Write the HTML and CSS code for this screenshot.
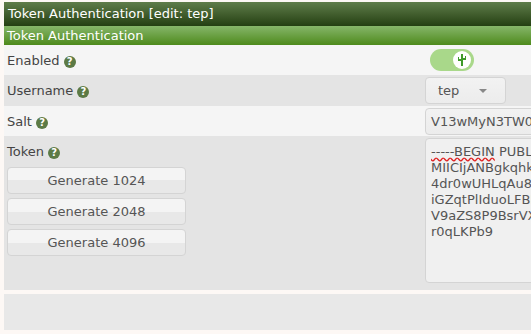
FILE: index.html
```html
<!DOCTYPE html>
<html lang="en">
<head>
  <meta charset="UTF-8" />
  <title>Token Authentication</title>
  <link rel="stylesheet" href="styles.css">
</head>
<body>

  <div class="window">
    <div class="titlebar">Token Authentication [edit: tep]</div>
    <div class="section">Token Authentication</div>

    <div class="row light">
      <div class="label">Enabled <span class="help">?</span></div>
      <div class="field">
        <div class="toggle">
          <span class="knob">
            <svg width="10" height="14" viewBox="0 0 10 14">
              <path d="M4 1h2v4h2V3h1v4H6v6H4V8H1V4h1v2h2z" fill="#3f9a2a"/>
            </svg>
          </span>
        </div>
      </div>
    </div>

    <div class="row dark">
      <div class="label">Username <span class="help">?</span></div>
      <div class="field">
        <div class="select">tep <span class="caret"></span></div>
      </div>
    </div>

    <div class="row light">
      <div class="label">Salt <span class="help">?</span></div>
      <div class="field">
        <div class="input">V13wMyN3TW0rkS9</div>
      </div>
    </div>

    <div class="row dark token">
      <div class="label">
        <div>Token <span class="help">?</span></div>
        <div class="buttons">
          <button>Generate 1024</button>
          <button>Generate 2048</button>
          <button>Generate 4096</button>
        </div>
      </div>
      <div class="field">
        <div class="textarea"><span class="spell">-----BEGIN</span> PUBLIC KEY-----
MIICIjANBgkqhkiG9w0BAQEFAAOCAg8AMIICCgKCAgEA
4dr0wUHLqAu8iQx
iGZqtPlIduoLFBDx
V9aZS8P9BsrVXq
r0qLKPb9</div>
      </div>
    </div>

    <div class="footer"></div>
  </div>

</body>
</html>
```

FILE: styles.css
```css
body {
  margin: 0;
  background: #fdf8f5;
  font-family: "DejaVu Sans", Verdana, sans-serif;
  font-size: 12px;
  color: #444;
  overflow: hidden;
}

.window {
  width: 620px;
  margin: 2px 0 0 4px;
}

.titlebar {
  height: 24px;
  line-height: 24px;
  padding-left: 4px;
  color: #fff;
  font-size: 13px;
  background: linear-gradient(#5f7d4a, #243f12);
}

.section {
  height: 19px;
  line-height: 19px;
  padding-left: 3px;
  color: #fff;
  font-size: 13px;
  background: linear-gradient(#86b66a, #4e8a1c);
}

.row {
  display: flex;
  height: 30px;
  align-items: center;
}
.row.light { background: #f5f5f5; }
.row.dark { background: #e4e4e4; height: 31px; }

.label {
  flex: 0 0 418px;
  padding-left: 3px;
  font-size: 13px;
}

.field {
  flex: 1;
  min-width: 0;
}

.help {
  display: inline-block;
  width: 12px;
  height: 12px;
  border-radius: 50%;
  background: #5c7a45;
  color: #fff;
  font-size: 10px;
  font-weight: bold;
  line-height: 12px;
  text-align: center;
  vertical-align: 0;
}

.toggle {
  width: 44px;
  height: 22px;
  margin-left: 5px;
  border-radius: 11px;
  background: #a9d88a;
  display: flex;
  align-items: center;
  justify-content: flex-end;
  padding-right: 3px;
  box-sizing: border-box;
}
.knob {
  width: 18px;
  height: 18px;
  border-radius: 50%;
  background: #fff;
  display: flex;
  align-items: center;
  justify-content: center;
}

.select, .input, .textarea, button {
  border: 1px solid #d4d4d4;
  border-radius: 4px;
  background: linear-gradient(#f2f2f2, #ececec);
  box-sizing: border-box;
  font-family: "DejaVu Sans", Verdana, sans-serif;
  font-size: 13px;
  color: #555;
}

.select {
  width: 81px;
  height: 27px;
  line-height: 25px;
  padding-left: 12px;
  position: relative;
}
.caret {
  position: absolute;
  right: 18px;
  top: 11px;
  border-left: 4px solid transparent;
  border-right: 4px solid transparent;
  border-top: 4px solid #888;
}

.input {
  height: 27px;
  line-height: 25px;
  padding-left: 5px;
  white-space: nowrap;
  overflow: hidden;
}

.row.token {
  height: 154px;
  align-items: flex-start;
}
.token .label {
  padding-top: 8px;
}
.token .field {
  padding-top: 2px;
}

.buttons {
  display: flex;
  flex-direction: column;
  gap: 4px;
  margin-top: 8px;
}
button {
  width: 179px;
  height: 27px;
  padding: 0;
  background: linear-gradient(#f4f4f4 50%, #e8e8e8 50%);
}

.textarea {
  height: 145px;
  padding: 5px 5px;
  white-space: pre;
  overflow: hidden;
  line-height: 16px;
  background: #f0f0f0;
}
.spell {
  text-decoration: underline wavy #e02020;
  text-decoration-skip-ink: none;
}

.footer {
  height: 36px;
  margin-top: 4px;
  background: #e8e8e8;
}
```
